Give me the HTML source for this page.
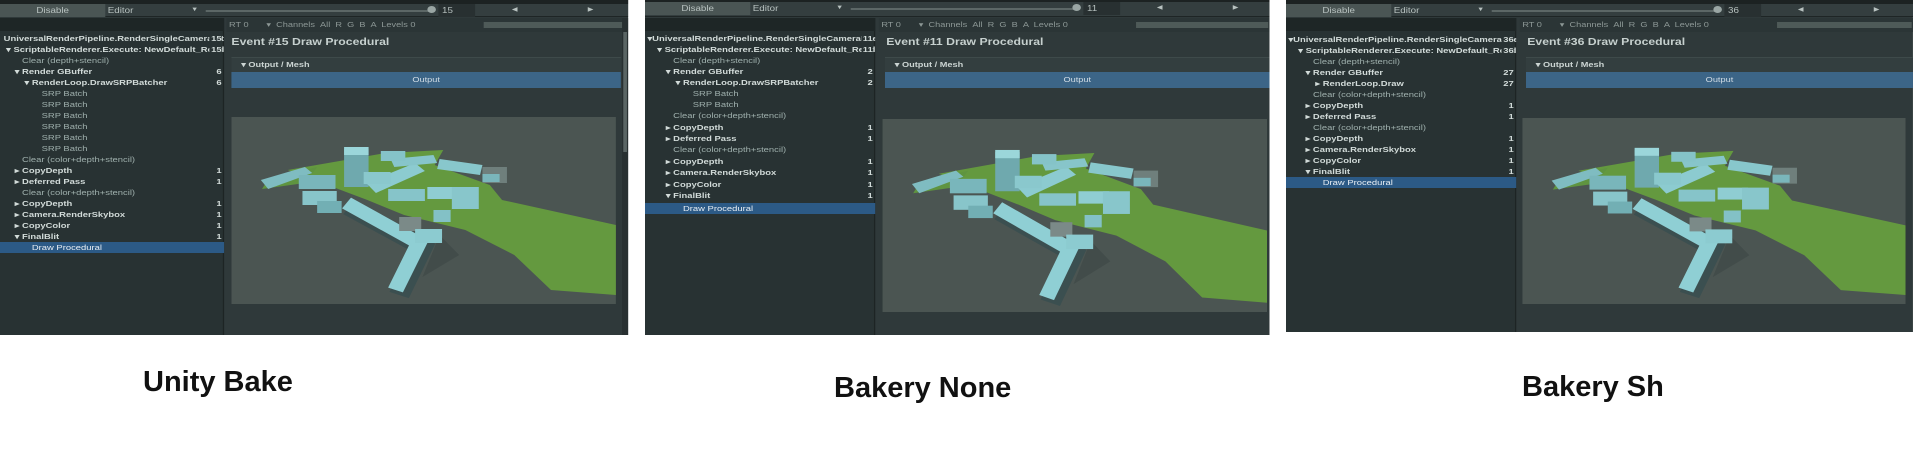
<!DOCTYPE html>
<html><head><meta charset="utf-8"><style>
*{margin:0;padding:0;box-sizing:border-box}
body{width:1920px;height:457px;background:#fff;position:relative;overflow:hidden;font-family:"Liberation Sans",sans-serif}
.p{position:absolute;top:0;width:513px;height:335px;background:#2f393a;overflow:hidden;transform:scaleX(1.2245);transform-origin:0 0}
.p div,.p span,.p svg{position:absolute}
.tb{left:0;top:0;width:100%;height:17px;background:#343e3f;border-bottom:1px solid #1e2525}
.tabs{left:0;top:0;width:100%;height:4px;background:#1c2222}
.dis{left:0;top:4px;width:86px;height:13px;background:#4a5554;color:#b8c2c0;font-size:8px;text-align:center;line-height:13px}
.ed{left:88px;top:4px;width:75px;height:13px;color:#b8c2c0;font-size:8px;line-height:13px}
.sl{left:168px;top:10px;width:185px;height:2px;background:#5c6766}
.kn{left:349px;top:6px;width:7px;height:7px;border-radius:50%;background:#9aa6a4}
.num{left:358px;top:4px;width:30px;height:13px;background:#283031;color:#b8c2c0;font-size:8px;line-height:13px;padding-left:3px}
.ar{top:4px;color:#b8c2c0;font-size:6px;line-height:13px}
.tree{left:0;top:18px;width:183px;height:317px;background:#283233;border-right:1px solid #1d2424}
.srch{left:0;top:18px;width:183px;height:13px;background:#1e2626}
.r{left:0;height:11px;width:183px;font-size:7.7px;line-height:11px;color:#c9d2d0;white-space:nowrap;overflow:hidden}
.r b{font-weight:bold;color:#d2dbd9}
.r i{font-style:normal;position:absolute;right:2px;top:0;color:#d2dbd9;font-weight:bold;background:#283233;padding-left:1px}
.r.c{color:#9fb0ad}
.sel{background:#2c5a86;color:#e8eef4}
.rt{left:185px;top:18px;width:328px;height:14px;background:#2b3536;font-size:7.5px;line-height:14px;color:#8d9896}
.ev{left:189px;top:37px;font-size:10px;color:#c6d0ce;font-weight:bold}
.om{left:189px;top:57px;width:318px;height:15px;background:#333e3f;border-top:1px solid #3e4a4a;font-size:7.5px;line-height:14px;color:#ccd5d3;font-weight:bold;padding-left:8px}
.out{left:189px;top:72px;width:318px;height:16px;background:#3c6587;color:#d0dbe4;font-size:7.5px;line-height:16px;text-align:center}
.img{left:189px;top:117px;width:314px;height:187px}
.sb{left:508px;top:18px;width:5px;height:317px;background:#283031}
.sb:after{content:"";position:absolute;left:1px;top:14px;width:3px;height:120px;background:#5a6564}
.lbl{position:absolute;top:366px;font-size:29px;font-weight:bold;color:#111;white-space:nowrap}
</style></head><body>

<svg width="0" height="0" style="position:absolute"><defs>
<g id="scene">
<rect width="314" height="187" fill="#4b5552"/>
<polygon points="46,53 126,36 173,33 166,48 211,68 221,83 314,108 314,178 261,173 231,138 191,113 141,98 111,83" fill="#64993f"/>
<polygon points="30,62 70,50 60,66 25,72" fill="#5f9440"/>
<polygon points="170,118 186,138 156,160" fill="#3a4442" opacity=".5"/>
<polyline points="96,90 156,130 137,178" fill="none" stroke="#3b4f50" stroke-width="17" stroke-linejoin="miter"/>
<polyline points="94,86 153,126 134,173" fill="none" stroke="#8fcfd4" stroke-width="13" stroke-linejoin="miter"/>
<rect x="92" y="32" width="20" height="38" fill="#6fa9ae"/><rect x="92" y="30" width="20" height="8" fill="#9bd6da"/>
<polygon points="24,63 60,50 66,56 30,72" fill="#7fbcc1"/>
<rect x="55" y="58" width="30" height="14" fill="#79b6bb"/>
<rect x="58" y="74" width="28" height="14" fill="#88c5ca"/>
<rect x="70" y="84" width="20" height="12" fill="#72afb4"/>
<polygon points="110,66 150,46 158,54 118,76" fill="#8ccbd0"/>
<rect x="108" y="55" width="22" height="12" fill="#8ac8cd"/>
<polygon points="130,42 165,38 168,46 133,50" fill="#87c5ca"/>
<polygon points="170,42 205,48 203,58 168,52" fill="#88c7cc"/>
<rect x="122" y="34" width="20" height="10" fill="#85c3c8"/>
<rect x="160" y="70" width="25" height="12" fill="#8fcdd2"/>
<rect x="180" y="70" width="22" height="22" fill="#88c6cb"/>
<rect x="165" y="93" width="14" height="12" fill="#83c1c6"/>
<rect x="137" y="100" width="18" height="14" fill="#7b8a88"/>
<rect x="150" y="112" width="22" height="14" fill="#8ccbd0"/>
<rect x="205" y="50" width="20" height="16" fill="#6f7f7c"/>
<rect x="205" y="57" width="14" height="8" fill="#7ab6bb"/>
<rect x="128" y="72" width="30" height="12" fill="#86c4c9"/>
</g></defs></svg>

<!-- Panel 1 -->
<div class="p" style="left:0">
 <div class="tb"><div class="tabs"></div><div class="dis">Disable</div><div class="ed">Editor<span style="left:68px;top:0;font-size:6px">▼</span></div><div class="sl"></div><div class="kn"></div><div class="num">15</div><div class="ar" style="left:418px">◀</div><div class="ar" style="left:480px">▶</div></div>
 <div class="tree"></div><div class="srch"></div>
 <div class="r" style="top:33px;padding-left:3px"><b>UniversalRenderPipeline.RenderSingleCameraInterı</b><i>15</i></div>
 <div class="r" style="top:44px;padding-left:5px"><b>▾ ScriptableRenderer.Execute: NewDefault_Render</b><i>15</i></div>
 <div class="r c" style="top:55px;padding-left:18px">Clear (depth+stencil)</div>
 <div class="r" style="top:66px;padding-left:12px"><b>▾ Render GBuffer</b><i>6</i></div>
 <div class="r" style="top:77px;padding-left:20px"><b>▾ RenderLoop.DrawSRPBatcher</b><i>6</i></div>
 <div class="r c" style="top:88px;padding-left:34px">SRP Batch</div>
 <div class="r c" style="top:99px;padding-left:34px">SRP Batch</div>
 <div class="r c" style="top:110px;padding-left:34px">SRP Batch</div>
 <div class="r c" style="top:121px;padding-left:34px">SRP Batch</div>
 <div class="r c" style="top:132px;padding-left:34px">SRP Batch</div>
 <div class="r c" style="top:143px;padding-left:34px">SRP Batch</div>
 <div class="r c" style="top:154px;padding-left:18px">Clear (color+depth+stencil)</div>
 <div class="r" style="top:165px;padding-left:12px"><b>▸ CopyDepth</b><i>1</i></div>
 <div class="r" style="top:176px;padding-left:12px"><b>▸ Deferred Pass</b><i>1</i></div>
 <div class="r c" style="top:187px;padding-left:18px">Clear (color+depth+stencil)</div>
 <div class="r" style="top:198px;padding-left:12px"><b>▸ CopyDepth</b><i>1</i></div>
 <div class="r" style="top:209px;padding-left:12px"><b>▸ Camera.RenderSkybox</b><i>1</i></div>
 <div class="r" style="top:220px;padding-left:12px"><b>▸ CopyColor</b><i>1</i></div>
 <div class="r" style="top:231px;padding-left:12px"><b>▾ FinalBlit</b><i>1</i></div>
 <div class="r sel" style="top:242px;padding-left:26px">Draw Procedural</div>
 <div class="rt"><span style="left:2px">RT 0 &nbsp;&nbsp;&nbsp;&nbsp;&nbsp;&nbsp;▾ &nbsp;Channels &nbsp;All &nbsp;R &nbsp;G &nbsp;B &nbsp;A &nbsp;Levels 0</span><span style="left:210px;top:4px;width:114px;height:6px;background:#4e5a58"></span></div>
 <div class="ev">Event #15 Draw Procedural</div>
 <div class="om">▾ Output / Mesh</div>
 <div class="out">Output</div>
 <svg class="img" viewBox="0 0 314 187" preserveAspectRatio="none"><use href="#scene"/></svg>
 <div class="sb"></div>
</div>

<!-- Panel 2 -->
<div class="p" style="left:645px;width:510px">
 <div class="tb"><div class="tabs" style="height:2px"></div><div class="dis" style="top:2px">Disable</div><div class="ed" style="top:2px">Editor<span style="left:68px;top:0;font-size:6px">▼</span></div><div class="sl" style="top:8px"></div><div class="kn" style="top:4px"></div><div class="num" style="top:2px">11</div><div class="ar" style="left:418px;top:2px">◀</div><div class="ar" style="left:480px;top:2px">▶</div></div>
 <div class="tree" style="width:188px"></div><div class="srch" style="width:188px"></div>
 <div class="r" style="top:33px;width:188px;padding-left:2px"><b>▾UniversalRenderPipeline.RenderSingleCameraInterr</b><i>11</i></div>
 <div class="r" style="top:44px;width:188px;padding-left:10px"><b>▾ ScriptableRenderer.Execute: NewDefault_Render</b><i>11</i></div>
 <div class="r c" style="top:55px;padding-left:23px">Clear (depth+stencil)</div>
 <div class="r" style="top:66px;width:188px;padding-left:17px"><b>▾ Render GBuffer</b><i>2</i></div>
 <div class="r" style="top:77px;width:188px;padding-left:25px"><b>▾ RenderLoop.DrawSRPBatcher</b><i>2</i></div>
 <div class="r c" style="top:88px;padding-left:39px">SRP Batch</div>
 <div class="r c" style="top:99px;padding-left:39px">SRP Batch</div>
 <div class="r c" style="top:110px;padding-left:23px">Clear (color+depth+stencil)</div>
 <div class="r" style="top:122px;width:188px;padding-left:17px"><b>▸ CopyDepth</b><i>1</i></div>
 <div class="r" style="top:133px;width:188px;padding-left:17px"><b>▸ Deferred Pass</b><i>1</i></div>
 <div class="r c" style="top:144px;padding-left:23px">Clear (color+depth+stencil)</div>
 <div class="r" style="top:156px;width:188px;padding-left:17px"><b>▸ CopyDepth</b><i>1</i></div>
 <div class="r" style="top:167px;width:188px;padding-left:17px"><b>▸ Camera.RenderSkybox</b><i>1</i></div>
 <div class="r" style="top:179px;width:188px;padding-left:17px"><b>▸ CopyColor</b><i>1</i></div>
 <div class="r" style="top:190px;width:188px;padding-left:17px"><b>▾ FinalBlit</b><i>1</i></div>
 <div class="r sel" style="top:203px;width:188px;padding-left:31px">Draw Procedural</div>
 <div class="rt" style="left:191px;width:319px"><span style="left:2px">RT 0 &nbsp;&nbsp;&nbsp;&nbsp;&nbsp;&nbsp;▾ &nbsp;Channels &nbsp;All &nbsp;R &nbsp;G &nbsp;B &nbsp;A &nbsp;Levels 0</span><span style="left:210px;top:4px;width:108px;height:6px;background:#4e5a58"></span></div>
 <div class="ev" style="left:197px">Event #11 Draw Procedural</div>
 <div class="om" style="left:196px;width:314px">▾ Output / Mesh</div>
 <div class="out" style="left:196px;width:314px">Output</div>
 <svg class="img" style="left:194px;top:119px;width:314px;height:193px" viewBox="0 0 314 187" preserveAspectRatio="none"><use href="#scene"/></svg>
</div>

<!-- Panel 3 -->
<div class="p" style="left:1286px;width:512px;height:332px">
 <div class="tb"><div class="tabs"></div><div class="dis">Disable</div><div class="ed">Editor<span style="left:68px;top:0;font-size:6px">▼</span></div><div class="sl"></div><div class="kn"></div><div class="num">36</div><div class="ar" style="left:418px">◀</div><div class="ar" style="left:480px">▶</div></div>
 <div class="tree" style="width:188px"></div><div class="srch" style="width:188px"></div>
 <div class="r" style="top:34px;width:188px;padding-left:2px"><b>▾UniversalRenderPipeline.RenderSingleCameraInter</b><i>36</i></div>
 <div class="r" style="top:45px;width:188px;padding-left:10px"><b>▾ ScriptableRenderer.Execute: NewDefault_Rende</b><i>36</i></div>
 <div class="r c" style="top:56px;padding-left:22px">Clear (depth+stencil)</div>
 <div class="r" style="top:67px;width:188px;padding-left:16px"><b>▾ Render GBuffer</b><i>27</i></div>
 <div class="r" style="top:78px;width:188px;padding-left:24px"><b>▸ RenderLoop.Draw</b><i>27</i></div>
 <div class="r c" style="top:89px;padding-left:22px">Clear (color+depth+stencil)</div>
 <div class="r" style="top:100px;width:188px;padding-left:16px"><b>▸ CopyDepth</b><i>1</i></div>
 <div class="r" style="top:111px;width:188px;padding-left:16px"><b>▸ Deferred Pass</b><i>1</i></div>
 <div class="r c" style="top:122px;padding-left:22px">Clear (color+depth+stencil)</div>
 <div class="r" style="top:133px;width:188px;padding-left:16px"><b>▸ CopyDepth</b><i>1</i></div>
 <div class="r" style="top:144px;width:188px;padding-left:16px"><b>▸ Camera.RenderSkybox</b><i>1</i></div>
 <div class="r" style="top:155px;width:188px;padding-left:16px"><b>▸ CopyColor</b><i>1</i></div>
 <div class="r" style="top:166px;width:188px;padding-left:16px"><b>▾ FinalBlit</b><i>1</i></div>
 <div class="r sel" style="top:177px;width:188px;padding-left:30px">Draw Procedural</div>
 <div class="rt" style="left:191px;width:321px"><span style="left:2px">RT 0 &nbsp;&nbsp;&nbsp;&nbsp;&nbsp;&nbsp;▾ &nbsp;Channels &nbsp;All &nbsp;R &nbsp;G &nbsp;B &nbsp;A &nbsp;Levels 0</span><span style="left:210px;top:4px;width:110px;height:6px;background:#4e5a58"></span></div>
 <div class="ev" style="left:197px">Event #36 Draw Procedural</div>
 <div class="om" style="left:196px;width:316px">▾ Output / Mesh</div>
 <div class="out" style="left:196px;width:316px">Output</div>
 <svg class="img" style="left:193px;top:118px;width:313px;height:186px" viewBox="0 0 314 187" preserveAspectRatio="none"><use href="#scene"/></svg>
</div>

<div class="lbl" style="left:143px">Unity Bake</div>
<div class="lbl" style="left:834px;top:372px">Bakery None</div>
<div class="lbl" style="left:1522px;top:371px">Bakery Sh</div>
</body></html>
